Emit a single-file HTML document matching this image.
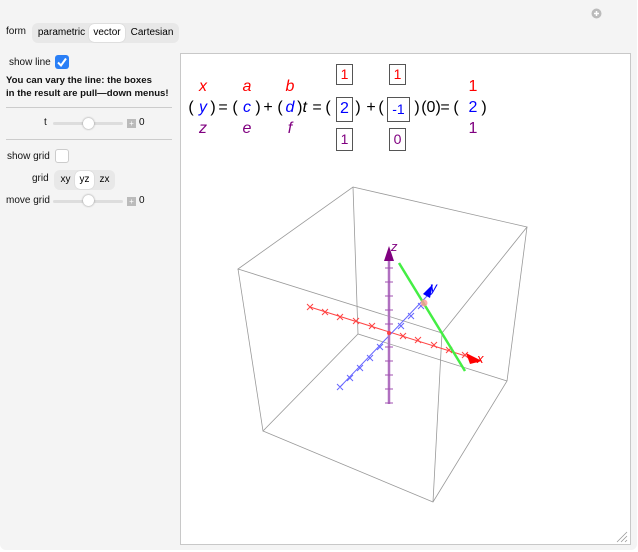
<!DOCTYPE html>
<html><head><meta charset="utf-8"><style>
*{margin:0;padding:0;box-sizing:border-box}
body{width:638px;height:552px;background:#fff;font-family:"Liberation Sans",sans-serif;position:relative;overflow:hidden}
#bg{position:absolute;left:0;top:0;width:637px;height:550px;background:#f4f4f4;border-radius:0 0 6px 6px}
.a{position:absolute;white-space:nowrap}
.s{font-size:10px;color:#111}
.seg{position:absolute;background:#e8e8e8;border-radius:6px;height:20px}
.seg span{position:absolute;top:0;height:20px;line-height:20px;font-size:10px;text-align:center}
.on{background:#fff;border-radius:5px;box-shadow:0 0 1px #aaa}
.track{position:absolute;height:3px;background:#ddd;border-radius:2px}
.knob{position:absolute;width:11px;height:11px;border-radius:50%;background:#fff;box-shadow:0 0 2px #888}
.plus{position:absolute;width:9px;height:9px;background:#bbb;color:#fff;font-size:8px;line-height:9px;text-align:center}
.hr{position:absolute;left:6px;width:166px;height:1px;background:#ccc}
#panel{position:absolute;left:180px;top:53px;width:451px;height:492px;background:#fff;border:1px solid #c8c8c8}
.e{position:absolute;font-size:16px;line-height:18px;transform:translate(-50%,-50%);white-space:nowrap}
.r{color:#f00;font-style:italic}.b{color:#00f;font-style:italic}.p{color:#800080;font-style:italic}
.bx{position:absolute;border:1.5px solid #555;font-size:14px;text-align:center}
</style></head><body>
<div id="bg"></div>
<svg class="a" style="left:591px;top:8px" width="11" height="11"><circle cx="5.5" cy="5.5" r="5" fill="#bbb"/><path d="M5.5 3v5M3 5.5h5" stroke="#fff" stroke-width="1.5"/></svg>
<div class="a s" style="left:6px;top:26px">form</div>
<div class="seg" style="left:32px;top:23px;width:147px">
 <span style="left:2px;width:55px">parametric</span>
 <span class="on" style="left:57px;width:36px;top:1px;height:18px;line-height:18px">vector</span>
 <span style="left:95px;width:50px">Cartesian</span>
</div>
<div class="a s" style="left:9px;top:57px">show line</div>
<div class="a" style="left:55px;top:55px;width:14px;height:14px;background:#2a7ff6;border-radius:3px"><svg width="14" height="14"><path d="M3 7.5l3 3 5-7" stroke="#fff" stroke-width="2" fill="none"/></svg></div>
<div class="a" style="left:6px;top:74px;font-size:9.6px;font-weight:bold;line-height:13px;color:#111">You can vary the line: the boxes<br>in the result are pull&#8212;down menus!</div>
<div class="hr" style="top:107px"></div>
<div class="a s" style="left:44px;top:117px">t</div>
<div class="track" style="left:53px;top:122px;width:70px"></div>
<div class="knob" style="left:83px;top:118px"></div>
<div class="plus" style="left:127px;top:119px">+</div>
<div class="a s" style="left:139px;top:117px">0</div>
<div class="hr" style="top:139px"></div>
<div class="a s" style="left:7px;top:151px">show grid</div>
<div class="a" style="left:55px;top:149px;width:14px;height:14px;background:#fff;border:1px solid #ccc;border-radius:3px"></div>
<div class="a s" style="left:32px;top:173px">grid</div>
<div class="seg" style="left:54px;top:170px;width:61px">
 <span style="left:2px;width:19px">xy</span>
 <span class="on" style="left:21px;width:19px;top:1px;height:18px;line-height:18px">yz</span>
 <span style="left:41px;width:19px">zx</span>
</div>
<div class="a s" style="left:6px;top:195px">move grid</div>
<div class="track" style="left:53px;top:200px;width:70px"></div>
<div class="knob" style="left:83px;top:195px"></div>
<div class="plus" style="left:127px;top:197px">+</div>
<div class="a s" style="left:139px;top:195px">0</div>

<div id="panel"></div>
<div class="e" style="left:191px;top:108px">(</div>
<div class="e r" style="left:203px;top:87px">x</div>
<div class="e b" style="left:203px;top:108px">y</div>
<div class="e p" style="left:203px;top:129px">z</div>
<div class="e" style="left:213px;top:108px">)</div>
<div class="e" style="left:223px;top:108px">=</div>
<div class="e" style="left:235px;top:108px">(</div>
<div class="e r" style="left:247px;top:87px">a</div>
<div class="e b" style="left:247px;top:108px">c</div>
<div class="e p" style="left:247px;top:129px">e</div>
<div class="e" style="left:258px;top:108px">)</div>
<div class="e" style="left:268px;top:108px">+</div>
<div class="e" style="left:280px;top:108px">(</div>
<div class="e r" style="left:290px;top:87px">b</div>
<div class="e b" style="left:290px;top:108px">d</div>
<div class="e p" style="left:290px;top:129px">f</div>
<div class="e" style="left:302px;top:108px">)<i>t</i></div>
<div class="e" style="left:317px;top:108px">=</div>
<div class="e" style="left:328px;top:108px">(</div>
<div class="bx" style="left:336px;top:64px;width:17px;height:21px;line-height:18px;color:#f00">1</div>
<div class="bx" style="left:336px;top:97px;width:17px;height:25px;line-height:22px;color:#00f;font-size:16px">2</div>
<div class="bx" style="left:336px;top:128px;width:17px;height:23px;line-height:20px;color:#800080">1</div>
<div class="e" style="left:358px;top:108px">)</div>
<div class="e" style="left:371px;top:108px">+</div>
<div class="e" style="left:381px;top:108px">(</div>
<div class="bx" style="left:389px;top:64px;width:17px;height:21px;line-height:18px;color:#f00">1</div>
<div class="bx" style="left:387px;top:97px;width:23px;height:25px;line-height:22px;color:#00f">-1</div>
<div class="bx" style="left:389px;top:128px;width:17px;height:23px;line-height:20px;color:#800080">0</div>
<div class="e" style="left:417px;top:108px">)</div>
<div class="e" style="left:431px;top:108px">(0)</div>
<div class="e" style="left:445px;top:108px">=</div>
<div class="e" style="left:456px;top:108px">(</div>
<div class="e" style="left:473px;top:87px;color:#f00">1</div>
<div class="e" style="left:473px;top:108px;color:#00f">2</div>
<div class="e" style="left:473px;top:129px;color:#800080">1</div>
<div class="e" style="left:484px;top:108px">)</div>

<svg class="a" style="left:0;top:0" width="638" height="552">
<g stroke="#999" stroke-width="0.8" fill="none">
<path d="M353 187L527 227L442 333L238 269Z"/>
<path d="M263 431L433 502L507 381L358 334Z"/>
<path d="M353 187L358 334M238 269L263 431M442 333L433 502M527 227L507 381"/>
</g>
<g stroke="#f44" stroke-width="1"><path d="M310 307L472 358"/>
<path d="M307 304l6 6M313 304l-6 6M322 309l6 6M328 309l-6 6M337 314l6 6M343 314l-6 6M353 318l6 6M359 318l-6 6M369 323l6 6M375 323l-6 6M400 333l6 6M406 333l-6 6M415 337l6 6M421 337l-6 6M431 342l6 6M437 342l-6 6M446 347l6 6M452 347l-6 6M462 352l6 6M468 352l-6 6"/></g>
<path d="M466 353L482 361L470 364Z" fill="#f00"/>
<text x="477" y="363" fill="#f00" font-size="13" font-style="italic" font-family="Liberation Sans">x</text>
<g stroke="#66f" stroke-width="1"><path d="M340 387L428 295"/>
<path d="M337 384l6 6M343 384l-6 6M347 375l6 6M353 375l-6 6M357 365l6 6M363 365l-6 6M367 355l6 6M373 355l-6 6M377 344l6 6M383 344l-6 6M398 323l6 6M404 323l-6 6M408 313l6 6M414 313l-6 6M418 303l6 6M424 303l-6 6"/></g>
<path d="M423 294L433 284L430 298Z" fill="#00f"/>
<text x="430" y="292" fill="#00f" font-size="14" font-style="italic" font-family="Liberation Sans">y</text>
<path d="M389 258L389 404" stroke="#b070c0" stroke-width="2.5"/>
<g stroke="#a050b0" stroke-width="1"><path d="M385 268h8M385 282h8M385 296h8M385 310h8M385 324h8M385 347h8M385 361h8M385 375h8M385 389h8M385 403h8"/></g>
<path d="M384 261L389 246L394 261Z" fill="#800080"/>
<text x="391" y="251" fill="#800080" font-size="13" font-style="italic" font-family="Liberation Sans">z</text>
<circle cx="389" cy="333" r="2" fill="#f44"/>
<path d="M399 263L465 371" stroke="#4e4" stroke-width="2.5"/>
<circle cx="424" cy="303" r="3.5" fill="#f99" opacity="0.8"/>
<g stroke="#999" stroke-width="0.8"><path d="M617 542L627 532M621 542L627 536M625 542L627 540"/></g>
</svg>
</body></html>
